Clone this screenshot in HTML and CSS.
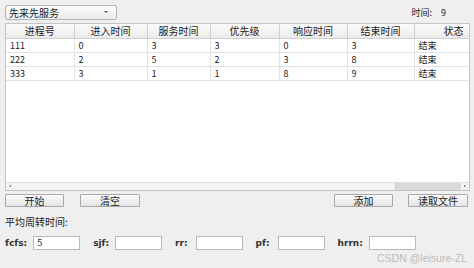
FILE: index.html
```html
<!DOCTYPE html>
<html>
<head>
<meta charset="utf-8">
<link rel="stylesheet" href="styles.css">
</head>
<body>
<div class="app">
  <div class="top">
    <div class="combo"><span>先来先服务</span><span class="arrow"></span></div>
    <div class="time">时间:<span class="tval">9</span></div>
  </div>
  <div class="tablebox">
    <table class="grid">
      <colgroup>
        <col class="c1"><col class="c2"><col class="c3"><col class="c4"><col class="c5"><col class="c6"><col class="c7">
      </colgroup>
      <thead>
        <tr><th>进程号</th><th>进入时间</th><th>服务时间</th><th>优先级</th><th>响应时间</th><th>结束时间</th><th class="last">状态</th></tr>
      </thead>
      <tbody>
        <tr><td>111</td><td>0</td><td>3</td><td>3</td><td>0</td><td>3</td><td>结束</td></tr>
        <tr><td>222</td><td>2</td><td>5</td><td>2</td><td>3</td><td>8</td><td>结束</td></tr>
        <tr><td>333</td><td>3</td><td>1</td><td>1</td><td>8</td><td>9</td><td>结束</td></tr>
      </tbody>
    </table>
    <div class="spacer"></div>
    <div class="hscroll">
      <span class="sarrow left"></span>
      <div class="track"><div class="thumb"></div></div>
      <span class="sarrow right"></span>
    </div>
  </div>
  <div class="buttons">
    <div class="group">
      <button class="btn">开始</button>
      <button class="btn">清空</button>
    </div>
    <div class="group right">
      <button class="btn">添加</button>
      <button class="btn">读取文件</button>
    </div>
  </div>
  <div class="avg">平均周转时间:</div>
  <div class="fields">
    <label class="lbl">fcfs:</label><div class="input">5</div>
    <label class="lbl">sjf:</label><div class="input"></div>
    <label class="lbl wide">rr:</label><div class="input"></div>
    <label class="lbl wide">pf:</label><div class="input"></div>
    <label class="lbl">hrrn:</label><div class="input"></div>
  </div>
  <div class="watermark">CSDN @leisure-ZL</div>
</div>
</body>
</html>
```
FILE: styles.css
```css
* { box-sizing: border-box; }
html, body { margin: 0; padding: 0; }
body {
  width: 474px;
  height: 268px;
  background: #efefef;
  font-family: "Noto Sans CJK SC", "DejaVu Sans", sans-serif;
  font-size: 10px;
  color: #222;
  overflow: hidden;
}
.app {
  display: flex;
  flex-direction: column;
  height: 268px;
  padding: 4px 4px 0 5px;
}
.top {
  display: flex;
  justify-content: space-between;
  align-items: center;
  height: 16px;
}
.combo {
  width: 112px;
  height: 15px;
  border: 1px solid #b5b5b5;
  border-radius: 2px;
  background: linear-gradient(#fdfdfd, #ececec);
  display: flex;
  align-items: center;
  justify-content: space-between;
  padding: 0 8px 0 3px;
  line-height: 13px;
}
.arrow {
  width: 0; height: 0;
  border-left: 2px solid transparent;
  border-right: 2px solid transparent;
  border-top: 2px solid #555;
}
.time {
  margin-right: 24px;
  margin-top: 0;
  font-size: 9px;
}
.tval { margin-left: 9px; }
.tablebox {
  margin-top: 3px;
  height: 168px;
  border: 1px solid #c4c4c4;
  background: #fff;
  display: flex;
  flex-direction: column;
  overflow: hidden;
}
.grid {
  border-collapse: collapse;
  table-layout: fixed;
  width: 472px;
  font-size: 9px;
}
.grid th { font-size: 10px; }
.c1 { width: 68px; }
.c2 { width: 73px; }
.c3 { width: 63px; }
.c4 { width: 69px; }
.c5 { width: 68px; }
.c6 { width: 67px; }
.c7 { width: 64px; }
.grid th {
  height: 14px;
  font-weight: normal;
  background: linear-gradient(#fbfbfb, #ebebeb);
  border-right: 1px solid #d0d0d0;
  border-bottom: 1px solid #cfcfcf;
  padding: 0;
  line-height: 13px;
  text-align: center;
}
.grid th.last { text-align: right; padding-right: 14px; }
.grid td {
  height: 14px;
  padding: 0 0 0 4px;
  line-height: 13px;
  border-right: 1px solid #e2e2e2;
  border-bottom: 1px solid #e2e2e2;
  white-space: nowrap;
}
.spacer { flex: 1; }
.hscroll {
  height: 8px;
  display: flex;
  align-items: stretch;
  background: #f3f3f3;
  border-top: 1px solid #e0e0e0;
}
.sarrow {
  width: 8px;
  position: relative;
}
.sarrow::after {
  content: "";
  position: absolute;
  top: 2px;
  left: 3px;
  border-top: 1.5px solid transparent;
  border-bottom: 1.5px solid transparent;
}
.sarrow.left::after { border-right: 2px solid #555; }
.sarrow.right::after { border-left: 2px solid #555; }
.track {
  flex: 1;
  background: #d9d9d9;
  display: flex;
}
.thumb {
  width: 382px;
  background: #f4f4f4;
  border-right: 1px solid #ccc;
}
.buttons {
  display: flex;
  justify-content: space-between;
  margin-top: 3px;
  height: 13px;
}
.group { display: flex; gap: 16px; }
.group.right { gap: 15px; margin-right: 2px; }
.btn {
  width: 59px;
  height: 13px;
  padding: 0;
  font-family: inherit;
  font-size: 10px;
  color: #222;
  border: 1px solid #a9a9a9;
  border-radius: 1px;
  background: linear-gradient(#fbfbfb, #e4e4e4);
  line-height: 11px;
}
.btn:nth-child(2) { width: 60px; }
.avg {
  margin-top: 8px;
  height: 14px;
  line-height: 14px;
}
.fields {
  display: flex;
  align-items: center;
  margin-top: 7px;
  height: 14px;
}
.lbl {
  font-family: "DejaVu Sans", sans-serif;
  font-size: 9px;
  font-weight: bold;
  color: #333;
  margin-right: 6px;
}
.lbl.wide { margin-right: 8px; }
.input {
  width: 47px;
  height: 14px;
  border: 1px solid #b9b9b9;
  background: #fff;
  margin-right: 13px;
  padding-left: 3px;
  line-height: 12px;
  font-size: 9px;
}
.watermark {
  align-self: flex-end;
  margin-top: 2px;
  margin-right: 3px;
  font-family: "Liberation Sans", sans-serif;
  font-size: 10.5px;
  color: #bcbcbc;
}
```
